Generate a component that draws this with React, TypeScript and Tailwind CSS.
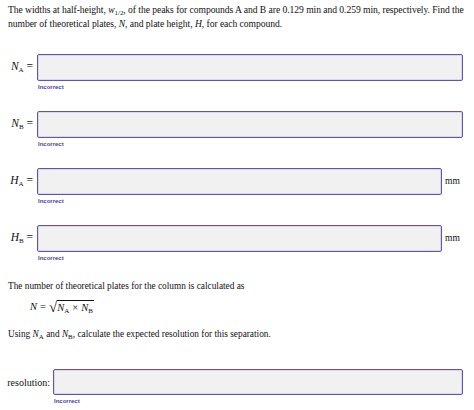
import React from "react";

const serif = { fontFamily: '"Liberation Serif", "Times New Roman", serif' };

function Box({ w }: { w: string }) {
  return (
    <div
      className={`${w} h-[27px] rounded-[2px] border border-[#5f55ad] bg-[#f1f1f1] shadow-[inset_0_0_0_1px_#d9d6ee]`}
    />
  );
}

function Incorrect() {
  return (
    <div
      className="mt-[2px] h-[8px] text-[6px] leading-[8px] font-bold text-[#4b3f9e]"
      style={{ fontFamily: '"Liberation Sans", Arial, sans-serif' }}
    >
      Incorrect
    </div>
  );
}

function Sub({ children }: { children: React.ReactNode }) {
  return <span className="text-[7px] leading-none not-italic align-[-2px]">{children}</span>;
}

function Row({
  label,
  unit,
  mt,
}: {
  label: React.ReactNode;
  unit?: boolean;
  mt: string;
}) {
  return (
    <div className={`${mt} flex`}>
      <div className="w-[37px] shrink-0 h-[27px] flex items-center justify-end pr-[4px] text-[11.5px] leading-none">
        {label}
      </div>
      <div className="flex flex-col">
        <div className="flex items-center">
          <Box w={unit ? "w-[405px]" : "w-[426px]"} />
          {unit && <span className="ml-[3px] text-[9.5px]">mm</span>}
        </div>
        <div className="pl-[1px]">
          <Incorrect />
        </div>
      </div>
    </div>
  );
}

export default function App() {
  return (
    <div className="w-[474px] h-[410px] bg-white text-[#111] overflow-hidden" style={serif}>
      <div className="pl-[8px] pt-[3px] pr-0 text-[9.6px] leading-[14px] tracking-[-0.05px]">
        The widths at half-height, <i>w</i>
        <Sub>1/2</Sub>, of the peaks for compounds A and B are 0.129 min and 0.259 min,
        respectively. Find the number of theoretical plates, <i>N</i>, and plate height,{" "}
        <i>H</i>, for each compound.
      </div>

      <Row
        mt="mt-[23px]"
        label={
          <span>
            <i>N</i>
            <Sub>A</Sub> =
          </span>
        }
      />
      <Row
        mt="mt-[20px]"
        label={
          <span>
            <i>N</i>
            <Sub>B</Sub> =
          </span>
        }
      />
      <Row
        mt="mt-[20px]"
        unit
        label={
          <span>
            <i>H</i>
            <Sub>A</Sub> =
          </span>
        }
      />
      <Row
        mt="mt-[20px]"
        unit
        label={
          <span>
            <i>H</i>
            <Sub>B</Sub> =
          </span>
        }
      />

      <div className="pl-[8px] mt-[17px] text-[9.3px] leading-[14px]">
        The number of theoretical plates for the column is calculated as
      </div>
      <div className="pl-[30px] mt-[6px] h-[16px] flex items-center text-[10.5px]">
        <i>N</i>
        <span className="mx-[3px]">=</span>
        <span className="text-[15px] leading-[14px]">√</span>
        <span className="border-t border-[#111] leading-[12px] pt-[1px] pr-[1px]">
          <i>N</i>
          <Sub>A</Sub>
          <span className="mx-[3px]">×</span>
          <i>N</i>
          <Sub>B</Sub>
        </span>
      </div>
      <div className="pl-[8px] mt-[12px] text-[9.3px] leading-[14px]">
        Using <i>N</i>
        <Sub>A</Sub> and <i>N</i>
        <Sub>B</Sub>, calculate the expected resolution for this separation.
      </div>

      <div className="mt-[28px] flex">
        <div className="w-[53px] shrink-0 h-[26px] flex items-center justify-end pr-[3px] text-[10px]">
          resolution:
        </div>
        <div className="flex flex-col">
          <div className="w-[410px] h-[26px] rounded-[2px] border border-[#5f55ad] bg-[#f1f1f1] shadow-[inset_0_0_0_1px_#d9d6ee]" />
          <div className="pl-[1px]">
            <Incorrect />
          </div>
        </div>
      </div>
    </div>
  );
}
